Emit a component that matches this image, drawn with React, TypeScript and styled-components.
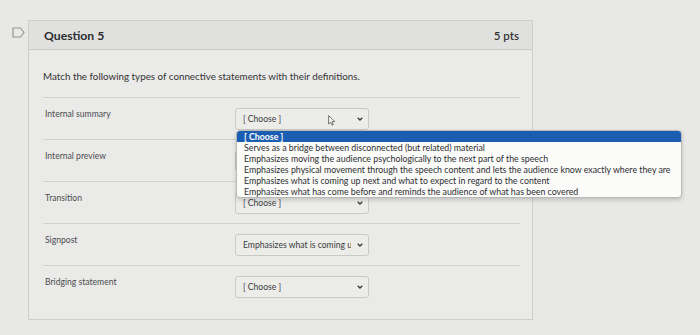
import React from "react";
import styled, { createGlobalStyle } from "styled-components";

const Global = createGlobalStyle`
  html, body { margin: 0; padding: 0; background: #e8e8e6; }
  body { font-family: Lato, "Open Sans", sans-serif; color: #2f3336; }
`;

const Page = styled.div`
  display: flex;
  align-items: flex-start;
  padding: 20px 0 0 12px;
  width: 700px;
  height: 335px;
  box-sizing: border-box;
  background: #e8e8e6;
`;

const FlagWrap = styled.div`
  width: 13px;
  height: 11px;
  margin: 7px 3px 0 0;
  display: flex;
`;

const Card = styled.div`
  width: 505px;
  border: 1px solid #cdcdcb;
  background: #eaeae8;
  box-sizing: border-box;
`;

const Header = styled.div`
  height: 28px;
  background: #e0e0de;
  border-bottom: 1px solid #cbcbc9;
  display: flex;
  align-items: center;
  justify-content: space-between;
  padding: 0 13px 0 15px;
`;

const Title = styled.div`
  font-size: 12.2px;
  font-weight: 700;
  color: #2b2d2f;
`;

const Points = styled.div`
  font-size: 11.5px;
  font-weight: 600;
  color: #333;
`;

const Body = styled.div`
  padding: 0 12px 12px 14px;
`;

const Prompt = styled.p`
  margin: 0;
  height: 47px;
  display: flex;
  align-items: center;
  padding-top: 4px;
  box-sizing: border-box;
  font-size: 9.8px;
  color: #333;
`;

const Row = styled.div<{ $first?: boolean }>`
  display: grid;
  grid-template-columns: 192px 134px;
  height: 42px;
  box-sizing: border-box;
  border-top: 1px solid #d2d2d0;
  padding-top: 10px;
  position: relative;
  z-index: ${(p) => (p.$first ? 5 : 1)};
`;

const Label = styled.div`
  font-size: 8.6px;
  color: #4a4c4e;
  padding: 1px 0 0 2px;
`;

const Select = styled.div`
  position: relative;
  height: 22px;
  box-sizing: border-box;
  border: 1px solid #c9c9c7;
  border-radius: 3px;
  background: #ecece9;
  display: flex;
  align-items: center;
  padding: 0 5px 0 7px;
  gap: 6px;
`;

const SelectText = styled.span`
  flex: 1;
  font-size: 8.6px;
  color: #3a3c3e;
  white-space: nowrap;
  overflow: hidden;
`;

const Chevron = () => (
  <svg width="6" height="4" viewBox="0 0 6 4">
    <polyline points="0.7,0.7 3,3 5.3,0.7" fill="none" stroke="#3a3c3e" strokeWidth="1.3" />
  </svg>
);

const Dropdown = styled.div`
  position: absolute;
  top: 21px;
  left: 0;
  width: 444px;
  background: #fbfbfa;
  border: 1px solid #b9b9b7;
  border-radius: 4px;
  box-shadow: 0 2px 4px rgba(0, 0, 0, 0.18);
  overflow: hidden;
  z-index: 10;
`;

const Option = styled.div<{ $active?: boolean }>`
  height: 11px;
  line-height: 11px;
  padding-left: 7px;
  font-size: 8.8px;
  white-space: nowrap;
  color: ${(p) => (p.$active ? "#ffffff" : "#2c2e30")};
  background: ${(p) => (p.$active ? "#1b5db0" : "transparent")};
  font-weight: ${(p) => (p.$active ? 700 : 400)};
`;

const Cursor = styled.svg`
  position: absolute;
  left: 92px;
  top: 6px;
`;

const options = [
  "[ Choose ]",
  "Serves as a bridge between disconnected (but related) material",
  "Emphasizes moving the audience psychologically to the next part of the speech",
  "Emphasizes physical movement through the speech content and lets the audience know exactly where they are",
  "Emphasizes what is coming up next and what to expect in regard to the content",
  "Emphasizes what has come before and reminds the audience of what has been covered",
];

const rows = [
  { label: "Internal summary", value: "[ Choose ]", open: true },
  { label: "Internal preview", value: "[ Choose ]" },
  { label: "Transition", value: "[ Choose ]" },
  { label: "Signpost", value: "Emphasizes what is coming up next and what to expect in regard to the content" },
  { label: "Bridging statement", value: "[ Choose ]" },
];

export default function App() {
  return (
    <>
      <Global />
      <Page>
        <FlagWrap>
          <svg width="13" height="11" viewBox="0 0 13 11">
            <path d="M1 1 H8.5 L12 5.5 L8.5 10 H1 Z" fill="none" stroke="#949492" strokeWidth="1.2" strokeLinejoin="round" />
          </svg>
        </FlagWrap>
        <Card>
          <Header>
            <Title>Question 5</Title>
            <Points>5 pts</Points>
          </Header>
          <Body>
            <Prompt>Match the following types of connective statements with their definitions.</Prompt>
            {rows.map((r, i) => (
              <Row key={r.label} $first={i === 0}>
                <Label>{r.label}</Label>
                <Select>
                  <SelectText>{r.value}</SelectText>
                  <Chevron />
                  {r.open && (
                    <>
                      <Cursor width="8" height="11" viewBox="0 0 8 11">
                        <path d="M0.6 0.6 L0.6 9 L2.6 7.2 L4 10.2 L5.3 9.6 L4 6.7 L6.8 6.6 Z" fill="#f4f4f2" stroke="#555" strokeWidth="0.8" strokeLinejoin="round" />
                      </Cursor>
                      <Dropdown>
                        {options.map((o, j) => (
                          <Option key={o} $active={j === 0}>{o}</Option>
                        ))}
                      </Dropdown>
                    </>
                  )}
                </Select>
              </Row>
            ))}
          </Body>
        </Card>
      </Page>
    </>
  );
}
